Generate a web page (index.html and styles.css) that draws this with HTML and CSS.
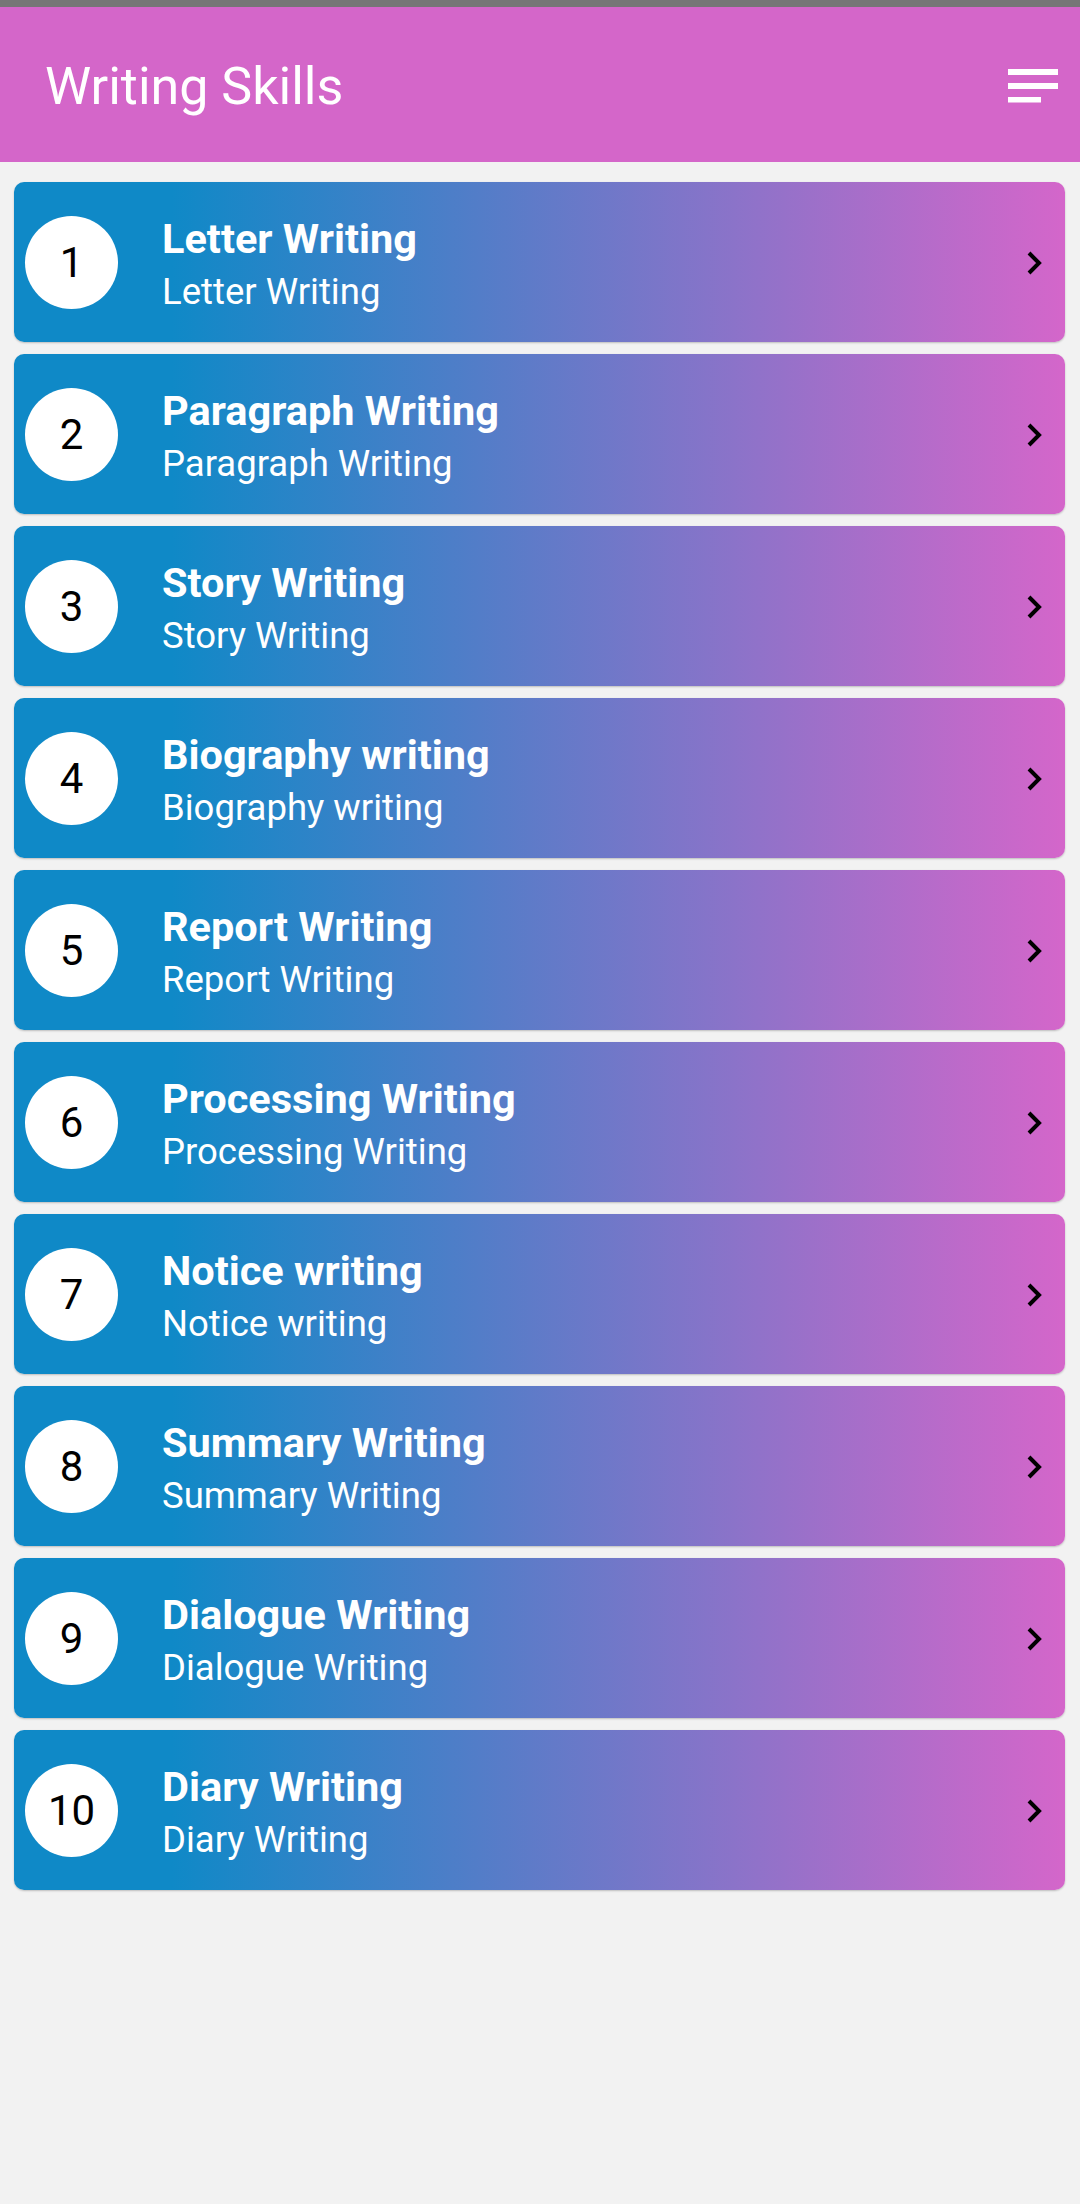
FILE: index.html
```html
<!DOCTYPE html>
<html lang="en">
<head>
<meta charset="utf-8">
<title>Writing Skills</title>
<link rel="stylesheet" href="styles.css">
</head>
<body>
<div class="status"></div>
<header class="appbar">
  <h1 class="appbar-title">Writing Skills</h1>
  <svg class="menu-icon" width="50" height="34" viewBox="0 0 50 34" aria-hidden="true">
    <rect x="0" y="0" width="50" height="6" fill="#fff"/>
    <rect x="0" y="14" width="50" height="6" fill="#fff"/>
    <rect x="0" y="28" width="33" height="5.5" fill="#fff"/>
  </svg>
</header>
<main class="list">
  <div class="card"><div class="num">1</div><div class="text"><div class="title">Letter Writing</div><div class="sub">Letter Writing</div></div><svg class="chev" width="20" height="28" viewBox="0 0 20 28"><polyline points="4,4 14,14 4,24" fill="none" stroke="#000" stroke-width="4"/></svg></div>
  <div class="card"><div class="num">2</div><div class="text"><div class="title">Paragraph Writing</div><div class="sub">Paragraph Writing</div></div><svg class="chev" width="20" height="28" viewBox="0 0 20 28"><polyline points="4,4 14,14 4,24" fill="none" stroke="#000" stroke-width="4"/></svg></div>
  <div class="card"><div class="num">3</div><div class="text"><div class="title">Story Writing</div><div class="sub">Story Writing</div></div><svg class="chev" width="20" height="28" viewBox="0 0 20 28"><polyline points="4,4 14,14 4,24" fill="none" stroke="#000" stroke-width="4"/></svg></div>
  <div class="card"><div class="num">4</div><div class="text"><div class="title">Biography writing</div><div class="sub">Biography writing</div></div><svg class="chev" width="20" height="28" viewBox="0 0 20 28"><polyline points="4,4 14,14 4,24" fill="none" stroke="#000" stroke-width="4"/></svg></div>
  <div class="card"><div class="num">5</div><div class="text"><div class="title">Report Writing</div><div class="sub">Report Writing</div></div><svg class="chev" width="20" height="28" viewBox="0 0 20 28"><polyline points="4,4 14,14 4,24" fill="none" stroke="#000" stroke-width="4"/></svg></div>
  <div class="card"><div class="num">6</div><div class="text"><div class="title">Processing Writing</div><div class="sub">Processing Writing</div></div><svg class="chev" width="20" height="28" viewBox="0 0 20 28"><polyline points="4,4 14,14 4,24" fill="none" stroke="#000" stroke-width="4"/></svg></div>
  <div class="card"><div class="num">7</div><div class="text"><div class="title">Notice writing</div><div class="sub">Notice writing</div></div><svg class="chev" width="20" height="28" viewBox="0 0 20 28"><polyline points="4,4 14,14 4,24" fill="none" stroke="#000" stroke-width="4"/></svg></div>
  <div class="card"><div class="num">8</div><div class="text"><div class="title">Summary Writing</div><div class="sub">Summary Writing</div></div><svg class="chev" width="20" height="28" viewBox="0 0 20 28"><polyline points="4,4 14,14 4,24" fill="none" stroke="#000" stroke-width="4"/></svg></div>
  <div class="card"><div class="num">9</div><div class="text"><div class="title">Dialogue Writing</div><div class="sub">Dialogue Writing</div></div><svg class="chev" width="20" height="28" viewBox="0 0 20 28"><polyline points="4,4 14,14 4,24" fill="none" stroke="#000" stroke-width="4"/></svg></div>
  <div class="card"><div class="num">10</div><div class="text"><div class="title">Diary Writing</div><div class="sub">Diary Writing</div></div><svg class="chev" width="20" height="28" viewBox="0 0 20 28"><polyline points="4,4 14,14 4,24" fill="none" stroke="#000" stroke-width="4"/></svg></div>
</main>
</body>
</html>
```

FILE: styles.css
```css
html, body {
  margin: 0;
  padding: 0;
}
body {
  background: #f2f2f2;
  font-family: Roboto, "Noto Sans", "Liberation Sans", sans-serif;
  min-height: 2204px;
}
.status {
  height: 7px;
  background: #767676;
}
.appbar {
  height: 155px;
  background: #d466c9;
  display: flex;
  align-items: center;
  justify-content: space-between;
  padding: 0 22px 0 45px;
  box-sizing: border-box;
}
.appbar-title {
  margin: 4px 0 0 0;
  font-size: 52px;
  line-height: 62px;
  font-weight: 400;
  color: #fff;
}
.menu-icon {
  display: block;
  margin-top: 2px;
}
.list {
  display: flex;
  flex-direction: column;
  gap: 12px;
  padding: 20px 15px 0 14px;
}
.card {
  height: 160px;
  box-sizing: border-box;
  display: flex;
  align-items: center;
  padding: 0 20px 0 11px;
  border-radius: 10px;
  background: linear-gradient(90deg, #0f89c7 15%, #d466ca 100%);
  box-shadow: 0 1px 2px rgba(0, 0, 0, 0.22);
}
.num {
  width: 93px;
  height: 93px;
  flex: none;
  border-radius: 50%;
  background: #fff;
  color: #000;
  font-size: 42px;
  display: flex;
  align-items: center;
  justify-content: center;
  margin-right: 44px;
}
.text {
  flex: 1;
  margin-top: 10px;
  color: #fff;
}
.title {
  font-size: 41.5px;
  line-height: 50px;
  font-weight: 700;
}
.sub {
  font-size: 36.5px;
  line-height: 56px;
  font-weight: 400;
}
.chev {
  flex: none;
  display: block;
  margin-top: 2px;
}
```
